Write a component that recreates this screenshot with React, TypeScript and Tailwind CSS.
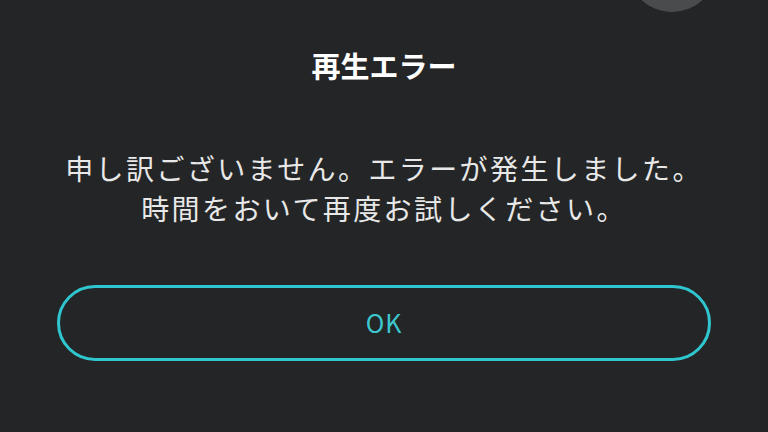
export default function App() {
  return (
    <div
      className="relative w-[768px] h-[432px] overflow-hidden bg-[#242527] text-white"
      style={{ fontFamily: '"Noto Sans CJK JP", "Noto Sans", sans-serif' }}
    >
      {/* close button peeking in from the top edge */}
      <div className="absolute -top-[78px] left-[627px] w-[90px] h-[90px] rounded-full bg-[#4a4b4d]" />

      <div className="flex flex-col items-center pt-[45px]">
        <h1 className="text-[29px] leading-[40px] font-bold">再生エラー</h1>

        <div className="mt-[63px] text-center text-[28px] leading-[40px] tracking-[2.4px] text-[#e8e8e8]">
          <p>申し訳ございません。エラーが発生しました。</p>
          <p>時間をおいて再度お試しください。</p>
        </div>

        <button
          type="button"
          className="mt-[57px] w-[654px] h-[76px] rounded-full border-[3px] border-[#2fc6cf] text-[25px] tracking-[1px] text-[#3cc7cf]"
        >
          OK
        </button>
      </div>
    </div>
  );
}
